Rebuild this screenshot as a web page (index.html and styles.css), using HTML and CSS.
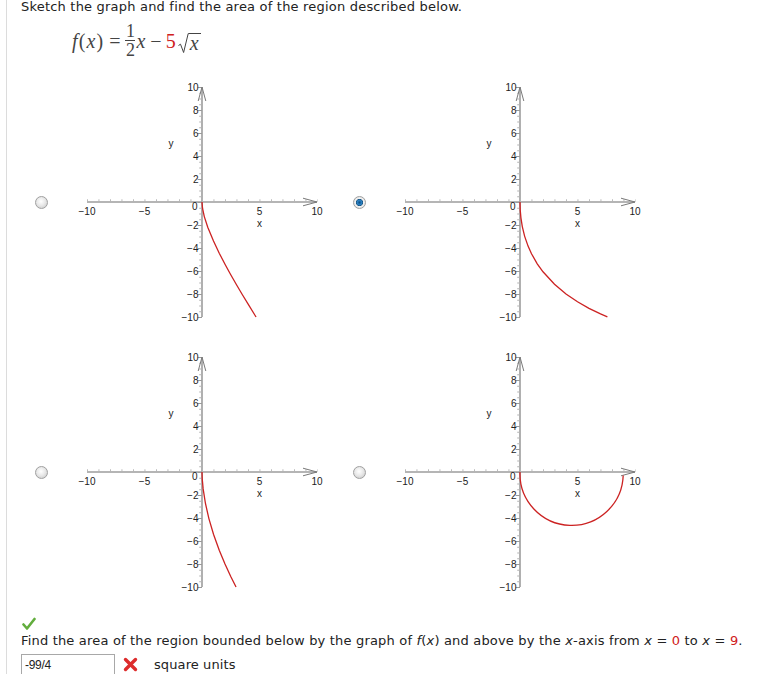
FILE: index.html
```html
<!DOCTYPE html>
<html>
<head>
<meta charset="utf-8">
<link rel="stylesheet" href="styles.css">
</head>
<body>
<div class="page">
  <p class="title">Sketch the graph and find the area of the region described below.</p>
  <div class="formula"><span class="fx"><span class="mi">f</span>(<span class="mi">x</span>)</span><span class="op">=</span><span class="frac"><span class="num">1</span><span class="bar"></span><span class="num">2</span></span><span class="mi vx">x</span><span class="op op2">−</span><span class="red">5</span><span class="sqrt"><svg class="radsign" width="11" height="21" viewBox="0 0 11 21"><path d="M0.5 12.5 L2.5 11.2 L5.6 19.5 L10.2 0.6 L11 0.6"/></svg><span class="radicand mi">x</span></span></div>

  <div class="choices">
    <div class="choice">
      <span class="radio"></span>
      <svg class="graph" width="290" height="260" viewBox="0 0 290 260">
        <defs>
          <g id="ax">
            <line class="axis" x1="33" y1="130" x2="263" y2="130"/>
            <line class="axis" x1="148" y1="15" x2="148" y2="245"/>
            <line class="tick" x1="146.5" y1="15" x2="146.5" y2="245.5" stroke-dasharray="0.9 4.85"/>
            <line class="tickm" x1="145.8" y1="15" x2="145.8" y2="246" stroke-dasharray="1 22"/>
            <line class="tick" x1="33" y1="128.6" x2="263.5" y2="128.6" stroke-dasharray="0.9 10.6"/>
            <polyline class="arrow" points="249,126.2 263,130 249,133.8"/>
            <polyline class="arrow" points="144.2,29 148,15 151.8,29"/>
          </g>
        </defs>
        <use href="#ax"/>
        <g class="lbl">
          <text class="e" x="144.5" y="18.5">10</text>
          <text class="e" x="144.5" y="41.5">8</text>
          <text class="e" x="144.5" y="64.5">6</text>
          <text class="e" x="144.5" y="87.5">4</text>
          <text class="e" x="144.5" y="110.5">2</text>
          <text class="e" x="143.5" y="137.5">0</text>
          <text class="e" x="144.5" y="156.5">−2</text>
          <text class="e" x="144.5" y="179.5">−4</text>
          <text class="e" x="144.5" y="202.5">−6</text>
          <text class="e" x="144.5" y="225.5">−8</text>
          <text class="e" x="144.5" y="248.5">−10</text>
          <text class="m" x="33" y="142.5">−10</text>
          <text class="m" x="90.5" y="142.5">−5</text>
          <text class="m" x="205.5" y="142.5">5</text>
          <text class="m" x="263" y="142.5">10</text>
          <text class="m" x="205.5" y="155">x</text>
          <text class="m" x="117" y="75">y</text>
        </g>
        <polyline class="curve" points="148,130 148.6,136.7 150.3,144.6 153.75,155.2 159.5,169.1 165.25,181.2 171,192.2 176.75,202.7 182.5,212.7 188.25,222.5 194,231.9 202.05,245"/>
      </svg>
    </div>

    <div class="choice">
      <span class="radio checked"></span>
      <svg class="graph" width="290" height="260" viewBox="0 0 290 260">
        <use href="#ax"/>
        <g class="lbl">
          <text class="e" x="144.5" y="18.5">10</text>
          <text class="e" x="144.5" y="41.5">8</text>
          <text class="e" x="144.5" y="64.5">6</text>
          <text class="e" x="144.5" y="87.5">4</text>
          <text class="e" x="144.5" y="110.5">2</text>
          <text class="e" x="143.5" y="137.5">0</text>
          <text class="e" x="144.5" y="156.5">−2</text>
          <text class="e" x="144.5" y="179.5">−4</text>
          <text class="e" x="144.5" y="202.5">−6</text>
          <text class="e" x="144.5" y="225.5">−8</text>
          <text class="e" x="144.5" y="248.5">−10</text>
          <text class="m" x="33" y="142.5">−10</text>
          <text class="m" x="90.5" y="142.5">−5</text>
          <text class="m" x="205.5" y="142.5">5</text>
          <text class="m" x="263" y="142.5">10</text>
          <text class="m" x="205.5" y="155">x</text>
          <text class="m" x="117" y="75">y</text>
        </g>
        <polyline class="curve" points="148,130 148.23,138 148.92,145.8 150.3,154.6 152.6,164.1 156.05,174.1 159.5,181.75 165.25,191.8 171,199.8 182.5,212.3 194,222 205.5,229.8 217,236.3 228.5,241.9 235.4,244.8"/>
      </svg>
    </div>

    <div class="choice">
      <span class="radio"></span>
      <svg class="graph" width="290" height="260" viewBox="0 0 290 260">
        <use href="#ax"/>
        <g class="lbl">
          <text class="e" x="144.5" y="18.5">10</text>
          <text class="e" x="144.5" y="41.5">8</text>
          <text class="e" x="144.5" y="64.5">6</text>
          <text class="e" x="144.5" y="87.5">4</text>
          <text class="e" x="144.5" y="110.5">2</text>
          <text class="e" x="143.5" y="137.5">0</text>
          <text class="e" x="144.5" y="156.5">−2</text>
          <text class="e" x="144.5" y="179.5">−4</text>
          <text class="e" x="144.5" y="202.5">−6</text>
          <text class="e" x="144.5" y="225.5">−8</text>
          <text class="e" x="144.5" y="248.5">−10</text>
          <text class="m" x="33" y="142.5">−10</text>
          <text class="m" x="90.5" y="142.5">−5</text>
          <text class="m" x="205.5" y="142.5">5</text>
          <text class="m" x="263" y="142.5">10</text>
          <text class="m" x="205.5" y="155">x</text>
          <text class="m" x="117" y="75">y</text>
        </g>
        <polyline class="curve" points="148,130 148.23,136.8 149.15,146.9 151.45,161.5 154.9,176.6 159.5,192.2 165.25,208.3 171,222.1 176.75,234.5 182.04,245"/>
      </svg>
    </div>

    <div class="choice">
      <span class="radio"></span>
      <svg class="graph" width="290" height="260" viewBox="0 0 290 260">
        <use href="#ax"/>
        <g class="lbl">
          <text class="e" x="144.5" y="18.5">10</text>
          <text class="e" x="144.5" y="41.5">8</text>
          <text class="e" x="144.5" y="64.5">6</text>
          <text class="e" x="144.5" y="87.5">4</text>
          <text class="e" x="144.5" y="110.5">2</text>
          <text class="e" x="143.5" y="137.5">0</text>
          <text class="e" x="144.5" y="156.5">−2</text>
          <text class="e" x="144.5" y="179.5">−4</text>
          <text class="e" x="144.5" y="202.5">−6</text>
          <text class="e" x="144.5" y="225.5">−8</text>
          <text class="e" x="144.5" y="248.5">−10</text>
          <text class="m" x="33" y="142.5">−10</text>
          <text class="m" x="90.5" y="142.5">−5</text>
          <text class="m" x="205.5" y="142.5">5</text>
          <text class="m" x="263" y="142.5">10</text>
          <text class="m" x="205.5" y="155">x</text>
          <text class="m" x="117" y="75">y</text>
        </g>
        <path class="curve" d="M148,130 A51.6,51.6 0 0 0 251.2,133.5"/>
      </svg>
    </div>
  </div>

  <div class="part2">
    <svg class="check" width="14" height="14" viewBox="0 0 14 14"><path d="M1.5 7.5 L5 11.5 L12.5 2"/></svg>
    <p class="question">Find the area of the region bounded below by the graph of <i>f</i>(<i>x</i>) and above by the <i>x</i>-axis from <i>x</i> = <span class="red">0</span> to <i>x</i> = <span class="red">9</span>.</p>
    <div class="answer">
      <input class="box" type="text" value="-99/4">
      <svg class="wrong" width="15" height="15" viewBox="0 0 15 15"><path d="M2.5 2.5 L12.5 12.5 M12.5 2.5 L2.5 12.5"/></svg>
      <span class="units">square units</span>
    </div>
  </div>
</div>
</body>
</html>
```

FILE: styles.css
```css
html, body {
  margin: 0;
  padding: 0;
  background: #fff;
}

body {
  font-family: "DejaVu Sans", Verdana, sans-serif;
  color: #222;
  overflow: hidden;
}

.page {
  margin-left: 6px;
  border-left: 1px solid #dcdcdc;
  padding-left: 14px;
  height: 674px;
  overflow: hidden;
}

.title {
  margin: -1px 0 0;
  font-size: 13px;
  line-height: 15px;
  letter-spacing: 0.2px;
  white-space: nowrap;
}

.formula {
  height: 47px;
  padding-left: 51px;
  padding-top: 7px;
  box-sizing: border-box;
  line-height: 40px;
  font-family: "Liberation Serif", "DejaVu Serif", serif;
  font-size: 20px;
  color: #444;
  white-space: nowrap;
}

.mi {
  font-style: italic;
}

.fx {
  letter-spacing: 1.1px;
}

.vx {
  margin-right: 1px;
}

.op {
  margin: 0 5px;
}

.op2 {
  margin: 0 4px;
}

.frac {
  display: inline-flex;
  flex-direction: column;
  align-items: center;
  vertical-align: middle;
  font-size: 18px;
  line-height: 15px;
  margin-right: 1px;
  position: relative;
  top: -2px;
}

.frac .bar {
  width: 10px;
  height: 1px;
  background: #444;
  margin: 1px 0 2px;
}

.red {
  color: #d02020;
}

.sqrt {
  display: inline-flex;
  align-items: flex-start;
  vertical-align: -6px;
  line-height: 19px;
  margin-left: 2px;
}

.radsign {
  display: block;
}

.radsign path {
  fill: none;
  stroke: #444;
  stroke-width: 1;
}

.radicand {
  border-top: 1px solid #444;
  padding: 0 2px 0 1px;
}

.choices {
  margin-top: 11px;
  margin-left: 14px;
  display: grid;
  grid-template-columns: 318px 318px;
  grid-auto-rows: 260px;
  row-gap: 10px;
}

.choice {
  display: flex;
  align-items: center;
}

.radio {
  width: 13px;
  height: 13px;
  box-sizing: border-box;
  border-radius: 50%;
  border: 1px solid #a0a0a0;
  background: radial-gradient(circle at 45% 40%, #ffffff 0%, #e9e9e9 45%, #c4c4c4 100%);
  flex: none;
}

.radio.checked {
  background: radial-gradient(circle at 50% 50%, #0d4f86 0%, #2f86c8 32%, #14507d 42%, #f2f2f2 50%, #d6d6d6 100%);
}

.graph {
  display: block;
  margin-left: 6px;
  flex: none;
}

.axis {
  stroke: #9c9c9c;
  stroke-width: 1.6;
}

.tick {
  stroke: #b4b4b4;
  stroke-width: 2.6;
}

.tickm {
  stroke: #9a9a9a;
  stroke-width: 4.4;
}

.arrow {
  fill: none;
  stroke: #7a7a7a;
  stroke-width: 1;
}

.lbl text {
  font-family: "Liberation Sans", Arial, sans-serif;
  font-size: 10px;
  fill: #222;
}

.lbl .e {
  text-anchor: end;
}

.lbl .m {
  text-anchor: middle;
}

.curve {
  fill: none;
  stroke: #cc2222;
  stroke-width: 1.3;
}

.part2 {
  padding-top: 15px;
}

.check {
  display: block;
  margin-left: 1px;
}

.check path {
  fill: none;
  stroke: #62ad3d;
  stroke-width: 2.6;
  stroke-linecap: round;
  stroke-linejoin: round;
}

.question {
  margin: 2px 0 0;
  font-size: 13px;
  line-height: 16px;
  letter-spacing: 0.18px;
  white-space: nowrap;
}

.question i {
  font-style: italic;
}

.answer {
  margin-top: 5px;
  display: flex;
  align-items: center;
}

.box {
  width: 94px;
  height: 21px;
  box-sizing: border-box;
  margin: 0;
  padding: 1px 3px 0;
  border: 1px solid #a8a8a8;
  font-family: "Liberation Sans", Arial, sans-serif;
  font-size: 12px;
  letter-spacing: -0.3px;
  color: #222;
  background: #fff;
  outline: none;
}

.wrong {
  display: block;
  margin-left: 8px;
}

.wrong path {
  fill: none;
  stroke: #dd2c2c;
  stroke-width: 3.4;
  stroke-linecap: round;
}

.units {
  margin-left: 16px;
  font-size: 13px;
  letter-spacing: 0.1px;
}
```
